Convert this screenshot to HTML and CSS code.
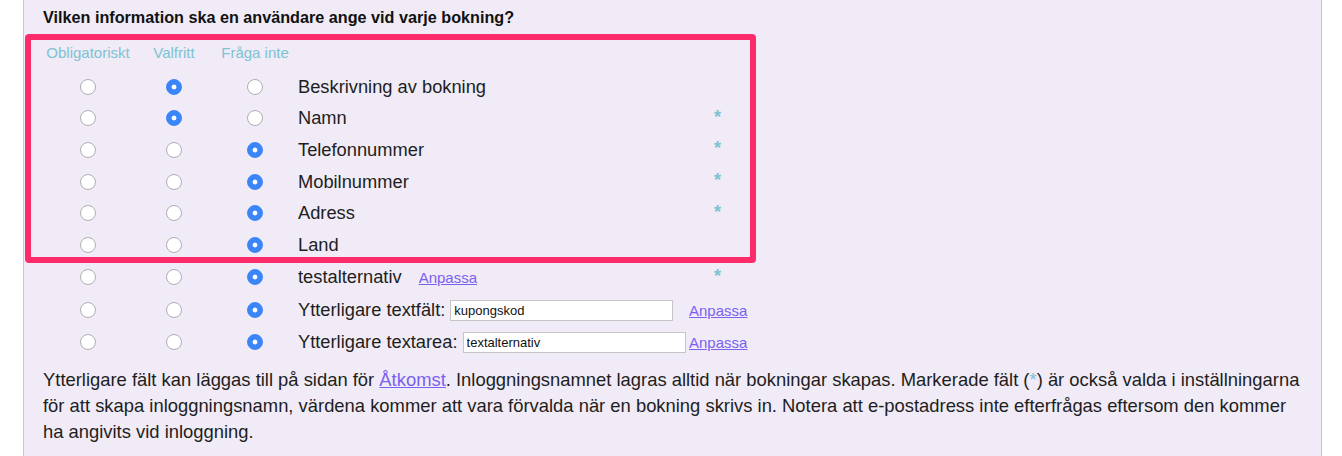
FILE: index.html
```html
<!DOCTYPE html>
<html lang="sv">
<head>
<meta charset="utf-8">
<title>Bokningsfält</title>
<link rel="stylesheet" href="styles.css">
</head>
<body>
<div class="panel">
  <h2 class="title">Vilken information ska en användare ange vid varje bokning?</h2>
  <div class="fields">
    <div class="row head">
      <span class="colhead">Obligatoriskt</span>
      <span class="colhead">Valfritt</span>
      <span class="colhead">Fråga inte</span>
    </div>
    <div class="row">
      <span class="rc"><input type="radio" name="f1"></span>
      <span class="rc"><input type="radio" name="f1" checked></span>
      <span class="rc"><input type="radio" name="f1"></span>
      <span class="label">Beskrivning av bokning</span>
      <span class="star"></span>
    </div>
    <div class="row">
      <span class="rc"><input type="radio" name="f2"></span>
      <span class="rc"><input type="radio" name="f2" checked></span>
      <span class="rc"><input type="radio" name="f2"></span>
      <span class="label">Namn</span>
      <span class="star">*</span>
    </div>
    <div class="row">
      <span class="rc"><input type="radio" name="f3"></span>
      <span class="rc"><input type="radio" name="f3"></span>
      <span class="rc"><input type="radio" name="f3" checked></span>
      <span class="label">Telefonnummer</span>
      <span class="star">*</span>
    </div>
    <div class="row">
      <span class="rc"><input type="radio" name="f4"></span>
      <span class="rc"><input type="radio" name="f4"></span>
      <span class="rc"><input type="radio" name="f4" checked></span>
      <span class="label">Mobilnummer</span>
      <span class="star">*</span>
    </div>
    <div class="row">
      <span class="rc"><input type="radio" name="f5"></span>
      <span class="rc"><input type="radio" name="f5"></span>
      <span class="rc"><input type="radio" name="f5" checked></span>
      <span class="label">Adress</span>
      <span class="star">*</span>
    </div>
    <div class="row">
      <span class="rc"><input type="radio" name="f6"></span>
      <span class="rc"><input type="radio" name="f6"></span>
      <span class="rc"><input type="radio" name="f6" checked></span>
      <span class="label">Land</span>
      <span class="star"></span>
    </div>
    <div class="row tall">
      <span class="rc"><input type="radio" name="f7"></span>
      <span class="rc"><input type="radio" name="f7"></span>
      <span class="rc"><input type="radio" name="f7" checked></span>
      <span class="label">testalternativ <a class="link inline-link" href="#">Anpassa</a></span>
      <span class="star">*</span>
    </div>
    <div class="row tall">
      <span class="rc"><input type="radio" name="f8"></span>
      <span class="rc"><input type="radio" name="f8"></span>
      <span class="rc"><input type="radio" name="f8" checked></span>
      <span class="label wide">
        <span class="inputwrap">Ytterligare textfält:<input class="textin" type="text" value="kupongskod"></span>
        <a class="link" href="#">Anpassa</a>
      </span>
    </div>
    <div class="row">
      <span class="rc"><input type="radio" name="f9"></span>
      <span class="rc"><input type="radio" name="f9"></span>
      <span class="rc"><input type="radio" name="f9" checked></span>
      <span class="label wide">
        <span class="inputwrap">Ytterligare textarea:<input class="textin" type="text" value="textalternativ"></span>
        <a class="link" href="#">Anpassa</a>
      </span>
    </div>
  </div>
  <p class="note">Ytterligare fält kan läggas till på sidan för <a class="link" href="#">Åtkomst</a>. Inloggningsnamnet lagras alltid när bokningar skapas. Markerade fält (<span class="mark">*</span>) är också valda i inställningarna för att skapa inloggningsnamn, värdena kommer att vara förvalda när en bokning skrivs in. Notera att e-postadress inte efterfrågas eftersom den kommer ha angivits vid inloggning.</p>
  <div class="highlight"></div>
</div>
</body>
</html>
```

FILE: styles.css
```css
* { box-sizing: border-box; }

html, body {
  margin: 0;
  padding: 0;
  background: #ffffff;
}

body {
  font-family: "Liberation Sans", Arial, Helvetica, sans-serif;
  color: #1e1e1e;
}

.panel {
  position: relative;
  margin-left: 23px;
  width: 1299px;
  min-height: 456px;
  background: #f0ebf6;
  border-left: 1px solid #c9c6cf;
  border-right: 1px solid #c9c6cf;
  padding: 9px 18px 20px 19px;
}

.title {
  margin: 0;
  font-size: 16.2px;
  line-height: 17px;
  font-weight: bold;
  color: #111111;
}

.fields {
  margin-top: 13px;
}

.row {
  display: grid;
  grid-template-columns: 90px 82px 80px 419px 1fr;
  align-items: center;
  height: 31.6px;
}

.row.head {
  height: 26px;
  margin-bottom: 6px;
}

.row.tall {
  height: 33px;
}

.colhead {
  text-align: center;
  font-size: 15px;
  color: #7dc3d3;
}

.rc {
  display: flex;
  justify-content: center;
  align-items: center;
}

.rc input {
  appearance: none;
  -webkit-appearance: none;
  margin: 0;
  width: 16px;
  height: 16px;
  border-radius: 50%;
  border: 1px solid #aeaeb2;
  background: #ffffff;
}

.rc input:checked {
  border-color: #3a85f7;
  background: radial-gradient(circle, #ffffff 0 2px, #3a85f7 2.8px);
}

.label {
  display: flex;
  align-items: center;
  padding-left: 3px;
  font-size: 18.3px;
  white-space: nowrap;
}

.label.wide {
  grid-column: 4 / 6;
}

.inputwrap {
  display: flex;
  align-items: center;
  width: 391px;
}

.textin {
  margin-left: 5px;
  width: 223px;
  height: 21px;
  border: 1px solid #c6c6c6;
  background: #ffffff;
  padding: 0 3px;
  font-family: "Liberation Sans", Arial, sans-serif;
  font-size: 13px;
  color: #111111;
}

.link {
  color: #7b61f0;
  text-decoration: underline;
  font-size: 15px;
}

.inline-link {
  margin-left: 17px;
}

.star {
  color: #7dc3d3;
  font-size: 18px;
  font-weight: bold;
  align-self: center;
  position: relative;
  top: -1px;
}

.note {
  margin: 9px 0 0 0;
  font-size: 18.4px;
  line-height: 26px;
  color: #1e1e1e;
}

.note .link {
  font-size: 18.4px;
}

.mark {
  color: #7dc3d3;
}

.highlight {
  position: absolute;
  left: 1px;
  top: 34px;
  width: 731px;
  height: 229px;
  border: 6px solid #fe2b6b;
  border-radius: 4px;
  pointer-events: none;
}
```
